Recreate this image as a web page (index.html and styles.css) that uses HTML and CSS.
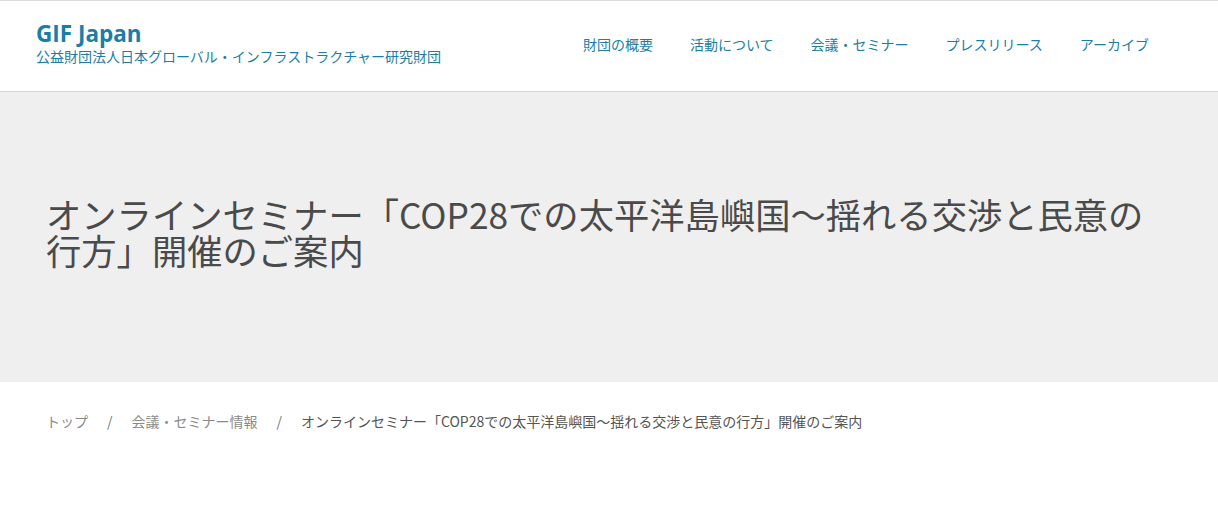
FILE: index.html
```html
<!DOCTYPE html>
<html lang="ja">
<head>
<meta charset="utf-8">
<title>GIF Japan</title>
<link rel="stylesheet" href="styles.css">
</head>
<body>
<header class="site-header">
  <div class="brand">
    <div class="brand-name">GIF Japan</div>
    <div class="brand-sub">公益財団法人日本グローバル・インフラストラクチャー研究財団</div>
  </div>
  <nav class="main-nav">
    <a href="#">財団の概要</a>
    <a href="#">活動について</a>
    <a href="#">会議・セミナー</a>
    <a href="#">プレスリリース</a>
    <a href="#">アーカイブ</a>
  </nav>
</header>
<section class="hero">
  <h1 class="hero-title">オンラインセミナー「COP28での太平洋島嶼国～揺れる交渉と民意の行方」開催のご案内</h1>
</section>
<div class="breadcrumb">
  <a href="#">トップ</a>
  <span class="sep">/</span>
  <a href="#">会議・セミナー情報</a>
  <span class="sep">/</span>
  <span class="current">オンラインセミナー「COP28での太平洋島嶼国～揺れる交渉と民意の行方」開催のご案内</span>
</div>
</body>
</html>
```

FILE: styles.css
```css
* { box-sizing: border-box; }
html, body { margin: 0; padding: 0; background: #fff; }
body {
  font-family: "Noto Sans CJK JP", "Noto Sans", sans-serif;
  color: #555;
}
a { text-decoration: none; }

.site-header {
  height: 92px;
  border-top: 1px solid #dcdcdc;
  border-bottom: 1px solid #d4d4d4;
  display: flex;
  align-items: center;
  justify-content: space-between;
  padding: 0 69px 5px 36px;
}
.brand-name {
  font-family: "Open Sans", "Noto Sans", sans-serif;
  font-weight: 700;
  font-size: 22.5px;
  line-height: 24px;
  color: #1a7ea6;
}
.brand-sub {
  font-size: 14px;
  line-height: 20px;
  color: #1a7ea6;
}
.main-nav {
  display: flex;
  gap: 37px;
}
.main-nav a {
  font-size: 14px;
  line-height: 20px;
  color: #1a7ea6;
}

.hero {
  background: #efefef;
  height: 290px;
  display: flex;
  align-items: center;
  padding: 0 46px 11px;
}
.hero-title {
  margin: 0;
  max-width: 1110px;
  font-weight: 400;
  font-size: 35.3px;
  line-height: 36px;
  color: #4a4a4a;
}

.breadcrumb {
  padding: 29px 46px;
  font-size: 14px;
  line-height: 20px;
  display: flex;
  align-items: center;
}
.breadcrumb a { color: #8a8a8a; }
.breadcrumb .sep { color: #777; margin: 0 19px; }
.breadcrumb .current { color: #555; }
```
